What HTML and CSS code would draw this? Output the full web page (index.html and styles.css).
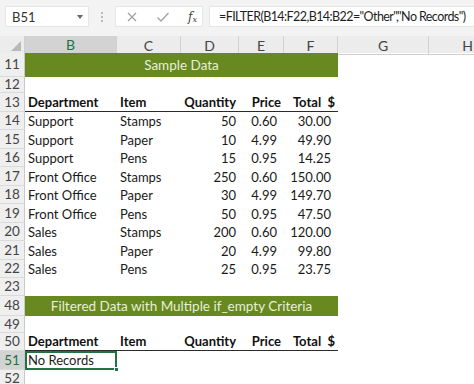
FILE: index.html
```html
<!DOCTYPE html>
<html>
<head>
<meta charset="utf-8">
<link rel="stylesheet" href="styles.css">
</head>
<body>
<div class="toolbar">
  <div class="namebox"><span class="nb-text">B51</span><span class="nb-arrow"></span></div>
  <div class="dots"><i></i><i></i><i></i></div>
  <div class="btns">
    <svg class="ico" width="12" height="12" viewBox="0 0 12 12"><path d="M2 2 L10 10 M10 2 L2 10" stroke="#a3a3a3" stroke-width="1.3" fill="none"/></svg>
    <svg class="ico" width="14" height="12" viewBox="0 0 14 12"><path d="M1.5 6.5 L5 10 L12.5 2" stroke="#a3a3a3" stroke-width="1.3" fill="none"/></svg>
    <span class="fx">f<sub>x</sub></span>
  </div>
  <div class="formula">=FILTER(B14:F22,B14:B22="Other","No Records")</div>
</div>
<div class="sheet">
  <div class="row colhead">
    <div class="corner"><svg width="12" height="12" viewBox="0 0 12 12"><path d="M11 1 L11 11 L1 11 Z" fill="#b9b9b9"/></svg></div>
    <div class="ch sel">B</div><div class="ch">C</div><div class="ch">D</div><div class="ch">E</div><div class="ch">F</div><div class="ch">G</div><div class="ch last">H</div>
  </div>

  <div class="row h24"><div class="rh">11</div><div class="band">Sample Data</div></div>
  <div class="row h16"><div class="rh">12</div></div>
  <div class="row h19 head"><div class="rh">13</div><div class="c b">Department</div><div class="c b">Item</div><div class="c b r">Quantity</div><div class="c b r">Price</div><div class="c b r tot">Total&nbsp;&nbsp;$</div></div>

  <div class="row h18"><div class="rh">14</div><div class="c">Support</div><div class="c">Stamps</div><div class="c r">50</div><div class="c r p">0.60</div><div class="c r p">30.00</div></div>
  <div class="row h19"><div class="rh">15</div><div class="c">Support</div><div class="c">Paper</div><div class="c r">10</div><div class="c r p">4.99</div><div class="c r p">49.90</div></div>
  <div class="row h18"><div class="rh">16</div><div class="c">Support</div><div class="c">Pens</div><div class="c r">15</div><div class="c r p">0.95</div><div class="c r p">14.25</div></div>
  <div class="row h19"><div class="rh">17</div><div class="c">Front Office</div><div class="c">Stamps</div><div class="c r">250</div><div class="c r p">0.60</div><div class="c r p">150.00</div></div>
  <div class="row h18"><div class="rh">18</div><div class="c">Front Office</div><div class="c">Paper</div><div class="c r">30</div><div class="c r p">4.99</div><div class="c r p">149.70</div></div>
  <div class="row h19"><div class="rh">19</div><div class="c">Front Office</div><div class="c">Pens</div><div class="c r">50</div><div class="c r p">0.95</div><div class="c r p">47.50</div></div>
  <div class="row h18"><div class="rh">20</div><div class="c">Sales</div><div class="c">Stamps</div><div class="c r">200</div><div class="c r p">0.60</div><div class="c r p">120.00</div></div>
  <div class="row h19"><div class="rh">21</div><div class="c">Sales</div><div class="c">Paper</div><div class="c r">20</div><div class="c r p">4.99</div><div class="c r p">99.80</div></div>
  <div class="row h18"><div class="rh">22</div><div class="c">Sales</div><div class="c">Pens</div><div class="c r">25</div><div class="c r p">0.95</div><div class="c r p">23.75</div></div>
  <div class="row h18"><div class="rh">23</div></div>

  <div class="row h20"><div class="rh">48</div><div class="band">Filtered Data with Multiple if_empty Criteria</div></div>
  <div class="row h17"><div class="rh">49</div></div>
  <div class="row h18 head"><div class="rh">50</div><div class="c b">Department</div><div class="c b">Item</div><div class="c b r">Quantity</div><div class="c b r">Price</div><div class="c b r tot">Total&nbsp;&nbsp;$</div></div>
  <div class="row h19"><div class="rh selrow">51</div><div class="c selcell">No Records<span class="handle"></span></div></div>
  <div class="row h14"><div class="rh">52</div></div>
</div>
</body>
</html>
```

FILE: styles.css
```css
* { box-sizing: border-box; }
html, body { margin: 0; padding: 0; }
body {
  width: 474px;
  height: 384px;
  overflow: hidden;
  background: #ffffff;
  font-family: "Lato", "Open Sans", sans-serif;
  color: #1a1a1a;
}

/* ---------- formula bar ---------- */
.toolbar {
  height: 36px;
  background: #f3f3f3;
  display: flex;
  align-items: flex-start;
  padding-top: 6px;
  padding-left: 5px;
}
.namebox {
  flex: 0 0 84px;
  height: 21px;
  background: #fff;
  border: 1px solid #e6e6e6;
  display: flex;
  align-items: center;
  justify-content: space-between;
  padding: 0 5px 0 6px;
}
.nb-text { font-size: 13px; color: #333; }
.nb-arrow {
  width: 0; height: 0;
  border-left: 3.5px solid transparent;
  border-right: 3.5px solid transparent;
  border-top: 4px solid #666;
}
.dots {
  flex: 0 0 26px;
  height: 21px;
  display: flex;
  flex-direction: column;
  align-items: center;
  justify-content: center;
  gap: 2px;
}
.dots i {
  display: block;
  width: 2px; height: 2px;
  background: #a8a8a8;
  border-radius: 1px;
}
.btns {
  flex: 0 0 88px;
  height: 21px;
  background: #fff;
  border: 1px solid #e6e6e6;
  display: flex;
  align-items: center;
  padding-left: 10px;
  gap: 18px;
}
.fx {
  font-family: "DejaVu Serif", "Liberation Serif", serif;
  font-style: italic;
  font-size: 12px;
  color: #444;
}
.fx sub { font-size: 8px; vertical-align: -1px; }
.formula {
  flex: 1 1 auto;
  min-width: 0;
  overflow: hidden;
  height: 21px;
  margin-left: 6px;
  background: #fff;
  border: 1px solid #e6e6e6;
  border-right: none;
  font-size: 12.5px;
  letter-spacing: -0.58px;
  color: #1e1e1e;
  display: flex;
  align-items: center;
  padding-left: 9px;
  white-space: nowrap;
}

/* ---------- sheet grid ---------- */
.sheet { display: flex; flex-direction: column; }
.row {
  display: grid;
  grid-template-columns: 25px 92px 64px 58px 45px 54px 91px 1fr;
  font-size: 13px;
}
.h14 { height: 14px; } .h16 { height: 16px; } .h17 { height: 17px; }
.h18 { height: 18px; } .h19 { height: 19px; } .h20 { height: 20px; }
.h24 { height: 24px; }

.colhead { height: 17px; background: #ececec; }
.corner {
  border-right: 1px solid #cfcfcf;
  border-bottom: 1px solid #cfcfcf;
  display: flex;
  align-items: flex-end;
  justify-content: flex-end;
  padding: 0 2px 2px 0;
}
.ch {
  display: flex;
  align-items: center;
  justify-content: center;
  font-size: 14px;
  color: #444;
  border-right: 1px solid #d2d2d2;
  border-bottom: 1px solid #cfcfcf;
}
.ch.last { border-right: none; justify-content: flex-end; padding-right: 1px; }
.ch.sel {
  background: #d3d3d3;
  color: #217346;
  border-bottom: 2px solid #217346;
}

.rh {
  grid-column: 1;
  background: #efefef;
  border-right: 1px solid #c9c9c9;
  border-bottom: 1px solid #dadada;
  color: #444;
  font-size: 13.5px;
  display: flex;
  align-items: center;
  justify-content: center;
  line-height: 1;
  padding-top: 1px;
}
.h14 .rh { align-items: flex-start; padding-top: 2px; border-bottom: none; }
.rh.selrow { background: #d3d3d3; color: #217346; }

.band {
  grid-column: 2 / span 5;
  background: #67891f;
  color: #e6efd8;
  display: flex;
  align-items: center;
  justify-content: center;
  font-size: 13.5px;
}

.c {
  display: flex;
  align-items: flex-end;
  padding: 0 3px 2px 3px;
  line-height: 1;
  white-space: nowrap;
  position: relative;
}
.c.r { justify-content: flex-end; }
.c.p { padding-right: 7px; }
.c.b { font-weight: bold; color: #111; }
.head .c { border-bottom: 1px solid #2b2b2b; padding-bottom: 2px; }
.head .c.tot { padding-right: 3px; }

.selcell {
  grid-column: 2;
  border: 2px solid #217346;
  padding-left: 1px;
  padding-bottom: 1px;
}
.handle {
  position: absolute;
  right: -4px;
  bottom: -4px;
  width: 5px;
  height: 5px;
  background: #217346;
  border: 1px solid #fff;
}
```
